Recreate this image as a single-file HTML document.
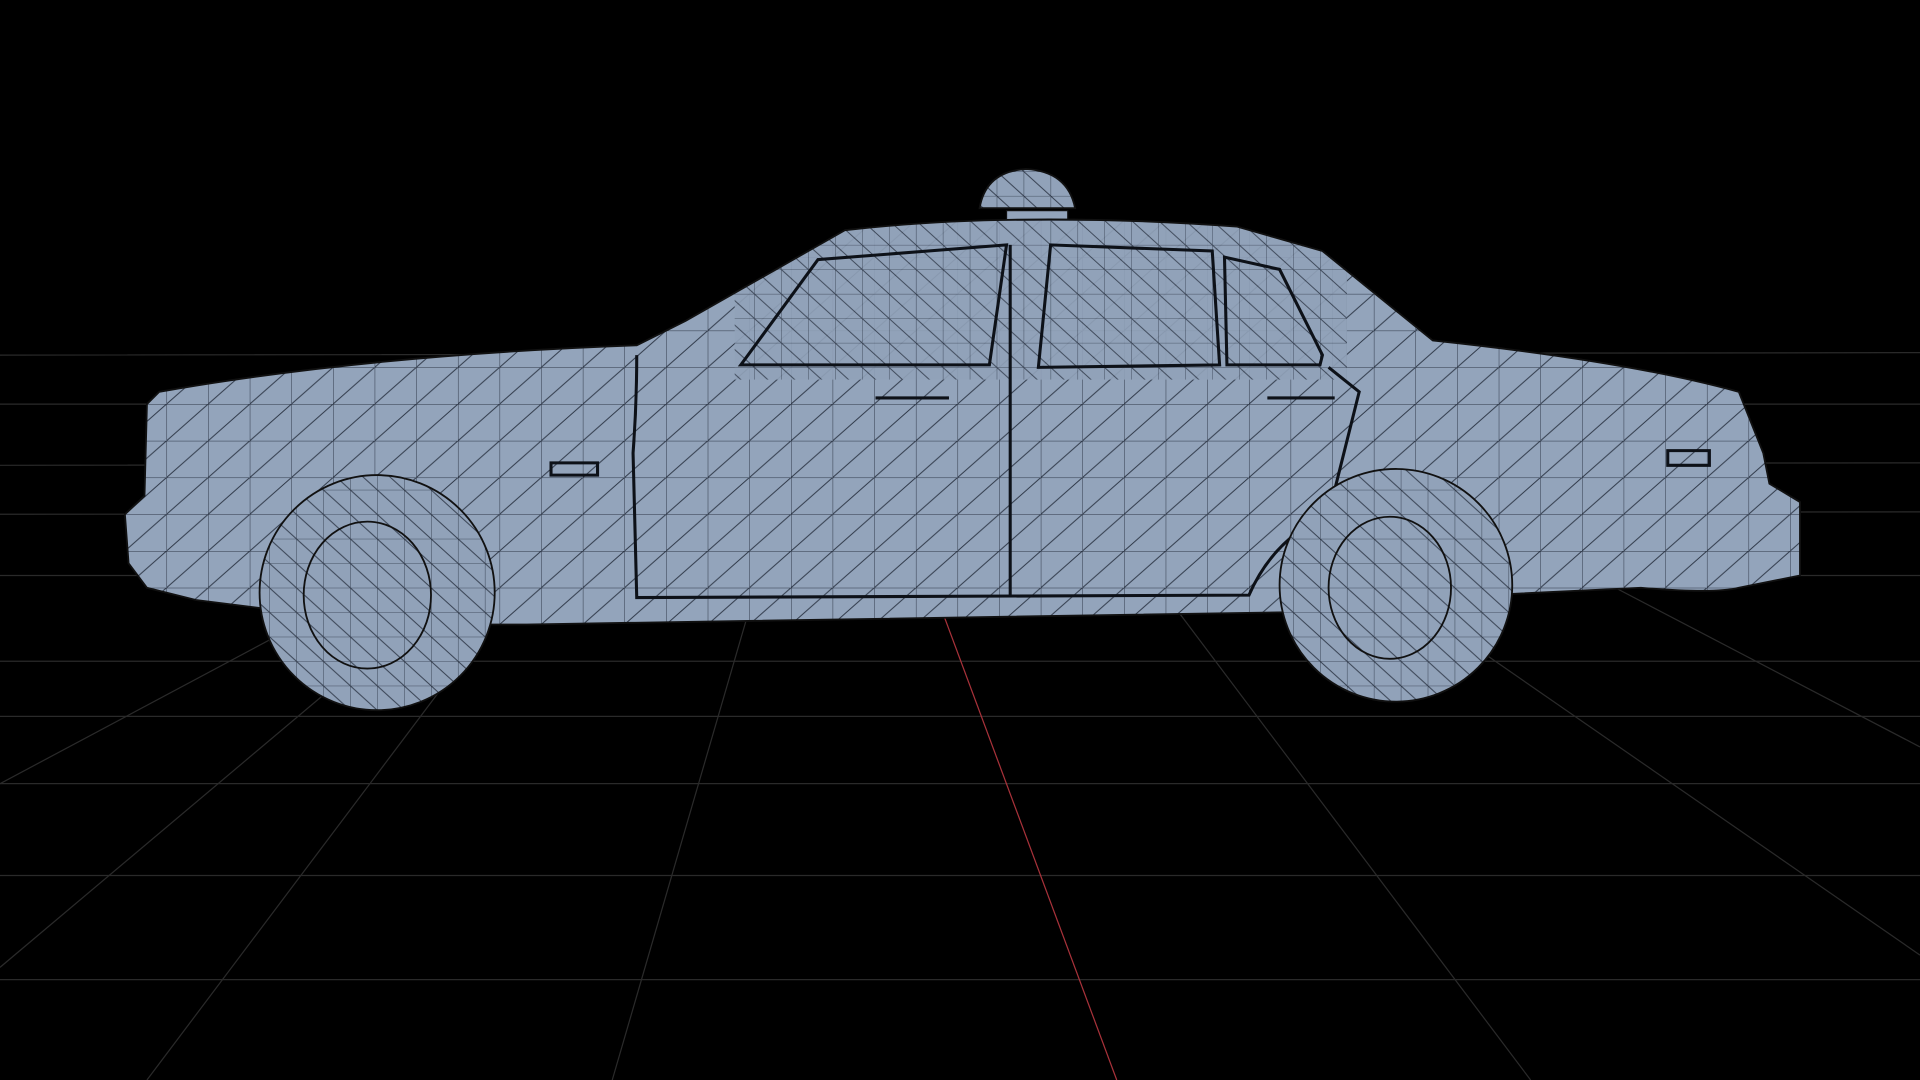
<!DOCTYPE html>
<html><head><style>html,body{margin:0;padding:0;background:#000;overflow:hidden}svg{display:block}</style></head>
<body>
<svg width="1920" height="1080" viewBox="0 0 1568 882" preserveAspectRatio="none" xmlns="http://www.w3.org/2000/svg">
<rect width="1568" height="882" fill="#000"/>
<defs>
<pattern id="mesh" width="34" height="30" patternUnits="userSpaceOnUse">
<rect width="34" height="30" fill="#93a4bb"/>
<path d="M0 0H34M0 0V30M0 30L34 0" stroke="#1a2230" stroke-width="0.8" stroke-opacity="0.85" fill="none"/>
</pattern>
<pattern id="mesh2" width="22" height="20" patternUnits="userSpaceOnUse">
<rect width="22" height="20" fill="#91a2b9"/>
<path d="M0 0H22M0 0V20M0 0L22 20" stroke="#1a2230" stroke-width="0.7" stroke-opacity="0.85" fill="none"/>
</pattern>
<clipPath id="car">
<path d="M120 330 L130 320 Q300 290 520 282 L560 262 L690 188 Q830 172 1010 185 L1080 205 L1170 278 Q1330 295 1420 320 L1440 370 L1445 395 L1470 410 L1470 470 L1420 480 Q1400 485 1340 480 L1235 485 L1200 495 L1050 500 L430 510 L400 510 L240 500 L160 490 L120 480 L105 460 L102 420 L118 405 Z"/>
</clipPath>
</defs>
<g stroke="#2a2a2a" stroke-width="1" fill="none">
<path d="M0 380 L1568 378 M0 420 L1568 418 M0 470 L1568 470 M0 540 L1568 540 M0 585 L1568 585 M0 640 L1568 640 M0 715 L1568 715 M0 800 L1568 800"/>
<path d="M0 290 L1568 288 M0 330 L1568 330"/>
<path d="M120 882 L430 470 M500 882 L620 470 M940 470 L1250 882 M0 640 L300 480 M1120 470 L1568 780 M1300 470 L1568 610 M0 790 L380 470"/>
</g>
<path d="M740 420 L912 882" stroke="#a8323a" stroke-width="1"/>
<path d="M800 170 Q805 140 838 138 Q872 140 878 170 Z" fill="url(#mesh2)" stroke="#111" stroke-width="1.5"/>
<rect x="822" y="172" width="50" height="10" fill="#93a4bb" stroke="#111"/>
<g clip-path="url(#car)">
<rect width="1568" height="882" fill="url(#mesh)"/>
<rect x="600" y="180" width="500" height="130" fill="url(#mesh2)" opacity="0.9"/>
</g>
<path d="M120 330 L130 320 Q300 290 520 282 L560 262 L690 188 Q830 172 1010 185 L1080 205 L1170 278 Q1330 295 1420 320 L1440 370 L1445 395 L1470 410 L1470 470 L1420 480 Q1400 485 1340 480 L1235 485 L1200 495 L1050 500 L430 510 L400 510 L240 500 L160 490 L120 480 L105 460 L102 420 L118 405 Z" fill="none" stroke="#111" stroke-width="1.5"/>
<g fill="none" stroke="#0d1118" stroke-width="2.5">
<path d="M605 298 L668 212 L822 200 L808 298 Z"/>
<path d="M848 300 L858 200 L990 205 L996 298 Z"/>
<path d="M1002 298 L1000 210 L1045 220 L1080 290 L1078 298 Z"/>
<path d="M520 290 Q520 330 517 370 L520 488 L1020 486 Q1040 440 1085 420 L1110 320 L1085 300"/>
<path d="M825 200 L825 486"/>
<path d="M450 378 h38 v10 h-38z M1362 368 h34 v12 h-34z"/>
<path d="M715 325 h60 M1035 325 h55"/>
</g>
<g stroke="#111" stroke-width="1.5">
<ellipse cx="308" cy="484" rx="96" ry="96" fill="url(#mesh2)"/>
<ellipse cx="300" cy="486" rx="52" ry="60" fill="none"/>
<ellipse cx="1140" cy="478" rx="95" ry="95" fill="url(#mesh2)"/>
<ellipse cx="1135" cy="480" rx="50" ry="58" fill="none"/>
</g>
</svg>
</body></html>
